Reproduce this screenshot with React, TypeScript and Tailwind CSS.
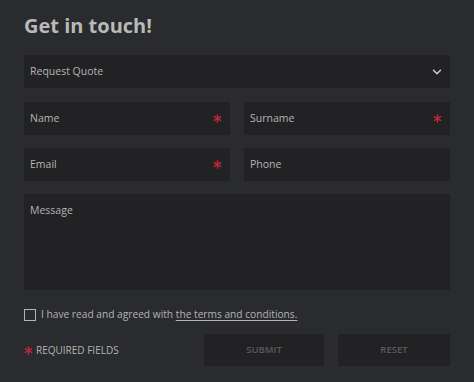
import { ChevronDown } from "lucide-react"

function Star({ className = "" }: { className?: string }) {
  return (
    <svg viewBox="0 0 10 10" className={`size-[9px] text-[#c8243c] ${className}`} aria-hidden>
      <g stroke="currentColor" strokeWidth="1.6" strokeLinecap="round">
        <line x1="5" y1="1" x2="5" y2="9" />
        <line x1="1.5" y1="3" x2="8.5" y2="7" />
        <line x1="1.5" y1="7" x2="8.5" y2="3" />
      </g>
    </svg>
  )
}

function Field({ label, required }: { label: string; required?: boolean }) {
  return (
    <div className="flex h-[33px] items-center justify-between bg-[#222224] pl-[6px] pr-[8px] text-[10.5px] text-[#b4b4b4]">
      <span>{label}</span>
      {required && <Star />}
    </div>
  )
}

export default function App() {
  return (
    <div
      className="h-[382px] w-[474px] bg-[#2a2b2e] px-[24px] pt-[11px]"
      style={{ fontFamily: '"Open Sans", "Noto Sans", sans-serif' }}
    >
      <h1 className="text-[20px] font-bold leading-[30px] text-[#b9b9b9]">Get in touch!</h1>

      <div className="mt-[14px] flex h-[33px] w-[426px] items-center justify-between bg-[#222224] pl-[6px] pr-[6px] text-[10.5px] text-[#b4b4b4]">
        <span>Request Quote</span>
        <ChevronDown className="size-[14px] text-[#d0d0d0]" strokeWidth={2.5} />
      </div>

      <div className="mt-[14px] grid w-[426px] grid-cols-2 gap-x-[14px] gap-y-[13px]">
        <Field label="Name" required />
        <Field label="Surname" required />
        <Field label="Email" required />
        <Field label="Phone" />
      </div>

      <div className="mt-[13px] h-[96px] w-[426px] bg-[#222224] px-[6px] pt-[9px] text-[10.5px] text-[#b4b4b4]">
        Message
      </div>

      <label className="mt-[17px] flex items-center gap-[5px] text-[10.2px] text-[#b4b4b4]">
        <span className="size-[12px] border-[1.5px] border-[#b4b4b4]" />
        <span>
          I have read and agreed with <span className="underline underline-offset-2">the terms and conditions.</span>
        </span>
      </label>

      <div className="mt-[12px] flex w-[426px] items-center">
        <div className="flex flex-1 items-center gap-[3px] text-[10px] text-[#b4b4b4]">
          <Star className="size-[8px]" />
          <span>REQUIRED FIELDS</span>
        </div>
        <div className="flex gap-[14px]">
          <button className="h-[32px] w-[120px] bg-[#222224] text-[9.5px] font-semibold text-[#5a5a5c]">SUBMIT</button>
          <button className="h-[32px] w-[112px] bg-[#222224] text-[9.5px] font-semibold text-[#5a5a5c]">RESET</button>
        </div>
      </div>
    </div>
  )
}
